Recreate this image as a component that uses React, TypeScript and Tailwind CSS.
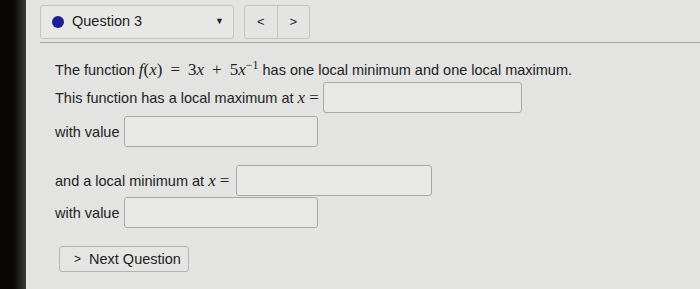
import React from "react";

const M = ({ children }: { children: React.ReactNode }) => (
  <span className="text-[17px] italic" style={{ fontFamily: '"Liberation Serif", serif' }}>{children}</span>
);
const R = ({ children }: { children: React.ReactNode }) => (
  <span className="text-[17px]" style={{ fontFamily: '"Liberation Serif", serif' }}>{children}</span>
);
const Op = ({ children, wide }: { children: React.ReactNode; wide?: boolean }) => (
  <span className={`${wide ? "mx-[8px]" : "mx-[4px]"} text-[17px]`} style={{ fontFamily: '"Liberation Serif", serif' }}>{children}</span>
);

const Box = ({ w }: { w: string }) => (
  <span className={`inline-block h-[31px] ${w} rounded-[3px] border border-[#a9aaa8] bg-[#e8e9e7] align-middle`} />
);

export default function App() {
  return (
    <div className="flex h-[289px] w-[700px] overflow-hidden bg-[#e3e4e2] text-[#222]" style={{ fontFamily: '"Liberation Sans", Arial, sans-serif' }}>
      <div className="w-[26px] shrink-0 bg-gradient-to-r from-[#0b0706] via-[#0a0707] to-[#3a3a3a]" />
      <div className="flex-1 pl-[14px] pt-[5px]">
        <div className="flex items-center gap-[10px]">
          <div className="flex h-[34px] w-[194px] items-center rounded-[3px] border border-[#c3c4c2] bg-[#e7e8e6] pl-[11px] pr-[9px]">
            <span className="h-[12px] w-[12px] rounded-full bg-[#1b1f8f]" />
            <span className="ml-[8px] text-[14.5px]">Question 3</span>
            <span className="ml-auto text-[9px]">▼</span>
          </div>
          <div className="flex h-[34px] w-[66px] rounded-[3px] border border-[#c3c4c2] bg-[#e4e5e3]">
            <div className="flex flex-1 items-center justify-center border-r border-[#c3c4c2] text-[13px]">&lt;</div>
            <div className="flex flex-1 items-center justify-center text-[13px]">&gt;</div>
          </div>
        </div>
        <div className="mt-[3px] h-px bg-[#a6a7a5]" />
        <div className="pl-[15px] pt-[16px] text-[14.5px] leading-[22px]">
          <div>
            The function <M>f</M><R>(</R><M>x</M><R>)</R><Op wide>=</Op><R>3</R><M>x</M><Op wide>+</Op><R>5</R><M>x</M>
            <sup className="text-[12px]" style={{ fontFamily: '"Liberation Serif", serif' }}>−1</sup> has one local minimum and one local maximum.
          </div>
          <div className="mt-[1px] flex items-center gap-0">
            <span>This function has a local maximum at <M>x</M><Op>=</Op></span>
            <Box w="w-[199px]" />
          </div>
          <div className="mt-[3px] flex items-center gap-[5px]">
            <span>with value</span>
            <Box w="w-[194px]" />
          </div>
          <div className="mt-[18px] flex items-center gap-[3px]">
            <span>and a local minimum at <M>x</M><Op>=</Op></span>
            <Box w="w-[196px]" />
          </div>
          <div className="mt-[1px] flex items-center gap-[5px]">
            <span>with value</span>
            <Box w="w-[194px]" />
          </div>
          <div className="mt-[18px] pl-[4px]">
            <div className="flex h-[26px] w-[130px] items-center gap-[8px] rounded-[3px] border border-[#b4b5b3] bg-[#e5e6e4] pl-[14px] text-[14.5px]">
              <span className="text-[12px]">&gt;</span>
              <span>Next Question</span>
            </div>
          </div>
        </div>
      </div>
    </div>
  );
}
